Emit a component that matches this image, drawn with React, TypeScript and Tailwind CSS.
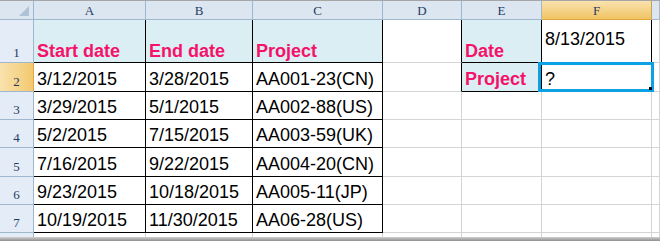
import React from "react";

const colWidths = [112, 107, 130, 79, 80, 110, 8];
const colNames = ["A", "B", "C", "D", "E", "F", ""];
const rowHeights = [43, 29, 28, 28, 29, 28, 28, 28];

type CellSpec = { text?: string; head?: boolean; fill?: boolean; middle?: boolean };

const rows: CellSpec[][] = [
  [
    { text: "Start date", head: true, fill: true },
    { text: "End date", head: true, fill: true },
    { text: "Project", head: true, fill: true },
    {},
    { text: "Date", head: true, fill: true },
    { text: "8/13/2015", middle: true },
    {},
  ],
  [{ text: "3/12/2015" }, { text: "3/28/2015" }, { text: "AA001-23(CN)" }, {}, { text: "Project", head: true, fill: true }, { text: "?" }, {}],
  [{ text: "3/29/2015" }, { text: "5/1/2015" }, { text: "AA002-88(US)" }, {}, {}, {}, {}],
  [{ text: "5/2/2015" }, { text: "7/15/2015" }, { text: "AA003-59(UK)" }, {}, {}, {}, {}],
  [{ text: "7/16/2015" }, { text: "9/22/2015" }, { text: "AA004-20(CN)" }, {}, {}, {}, {}],
  [{ text: "9/23/2015" }, { text: "10/18/2015" }, { text: "AA005-11(JP)" }, {}, {}, {}, {}],
  [{ text: "10/19/2015" }, { text: "11/30/2015" }, { text: "AA06-28(US)" }, {}, {}, {}, {}],
  [{}, {}, {}, {}, {}, {}, {}],
];

// which edges get the black table border
function edgeClasses(r: number, c: number) {
  const inLeft = r <= 6 && c <= 2;
  const inRight = r <= 1 && (c === 4 || c === 5);
  const right = inLeft || inRight || (r <= 1 && c === 3);
  const bottom = inLeft || inRight;
  return `${right ? "border-r-black" : "border-r-[#d4d4d4]"} ${bottom ? "border-b-black" : "border-b-[#d4d4d4]"}`;
}

function CornerCell() {
  return (
    <div className="relative h-full w-[34px] shrink-0 border-r border-b border-[#9eb6ce] bg-[#dce6f1]">
      <svg className="absolute right-[4px] bottom-[3px]" width="10" height="10" viewBox="0 0 10 10">
        <polygon points="10,0 10,10 0,10" fill="#b0c2d8" />
      </svg>
    </div>
  );
}

export default function App() {
  return (
    <div className="flex h-[241px] w-[660px] flex-col overflow-hidden border-t border-[#a6a6a6] bg-white">
      <div className="h-[236px] overflow-hidden">
        {/* column headers */}
        <div className="flex h-[19px]">
          <CornerCell />
          {colNames.map((name, i) => (
            <div
              key={i}
              style={{ width: colWidths[i] }}
              className={`flex shrink-0 items-center justify-center border-r border-b font-['Liberation_Serif',serif] text-[13px] leading-none text-[#1f3b63] ${
                name === "F"
                  ? "border-b-[#e2a63f] border-r-[#c9a25a] bg-gradient-to-b from-[#f9e2ad] to-[#f1c462]"
                  : "border-[#9eb6ce] bg-[#dce6f1]"
              } ${i === 6 ? "border-r-[#b5b5b5]" : ""}`}
            >
              {name}
            </div>
          ))}
        </div>

        {/* data rows */}
        {rows.map((row, r) => (
          <div key={r} className="flex" style={{ height: rowHeights[r] }}>
            <div
              className={`flex w-[34px] shrink-0 items-end justify-center border-r border-b pb-[1px] font-['Liberation_Serif',serif] text-[13px] leading-[16px] text-[#1f3b63] ${
                r === 1
                  ? "border-r-[#e2a63f] border-b-[#9eb6ce] bg-gradient-to-r from-[#f9e2ad] to-[#f3c96f]"
                  : "border-[#9eb6ce] bg-[#e4ecf7]"
              }`}
            >
              {r + 1}
            </div>
            {row.map((cell, c) => (
              <div
                key={c}
                style={{ width: colWidths[c] }}
                className={`relative flex shrink-0 border-r border-b pl-[3px] font-['Liberation_Sans',Arial,sans-serif] text-[18px] leading-[20px] whitespace-nowrap ${edgeClasses(r, c)} ${
                  cell.fill ? "bg-[#daeef3]" : "bg-white"
                } ${cell.middle ? "items-center pb-[4px]" : r === 0 ? "items-end pb-[1px]" : "items-end pb-[2px]"} ${
                  cell.head ? "font-bold text-[#f5126a]" : "text-black"
                } ${c === 6 ? "border-r-[#b5b5b5]" : ""}`}
              >
                {cell.text}
                {r === 1 && c === 5 && (
                  <div className="absolute -top-[1px] -left-[4px] -right-[3px] -bottom-[1px] z-10 border-[3px] border-[#0ba1e2]">
                    <div className="absolute right-[-1px] bottom-[-1px] h-[3px] w-[3px] bg-black" />
                  </div>
                )}
              </div>
            ))}
          </div>
        ))}
      </div>
      <div className="h-[4px] bg-gradient-to-b from-[#d0d0d0] to-[#8f8f8f]" />
    </div>
  );
}
